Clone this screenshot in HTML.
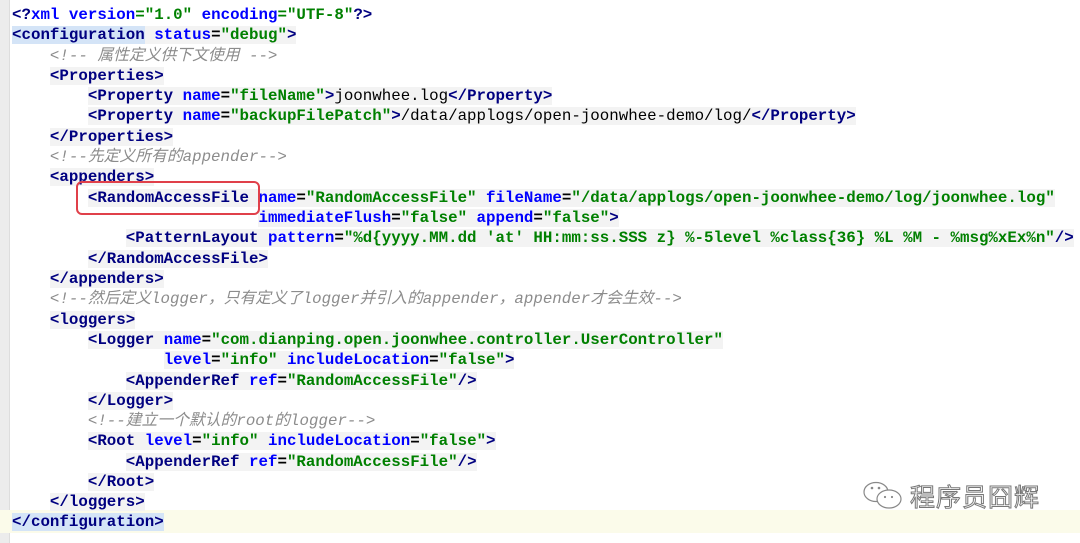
<!DOCTYPE html>
<html><head><meta charset="utf-8"><style>
body{margin:0;width:1080px;height:543px;background:#fff;overflow:hidden;position:relative;font-family:"Liberation Mono","Noto Sans CJK SC",monospace;}
.g{position:absolute;left:0;top:0;width:9px;height:543px;background:#ececec;border-right:1px solid #ddd}
.l{position:absolute;left:12px;height:20px;line-height:20px;font-size:15.8px;white-space:pre;font-weight:bold;color:#000}
.b{background:#f3f3f3}
.t{color:#000080}.a{color:#0000ff}.v{color:#008000}
.c{color:#8c8c8c;font-style:italic;font-weight:normal}
.hl{background:#d4e4f7}
.yl{position:absolute;left:0;top:510px;width:1080px;height:23px;background:#fbfbea}
.box{position:absolute;left:76px;top:181px;width:180px;height:30px;border:2.5px solid #e0404a;border-radius:6px}
.wm{position:absolute;left:862px;top:478px;font-family:"Noto Sans CJK SC",sans-serif;font-size:25px;color:#fff;-webkit-text-stroke:1px #777;letter-spacing:1px}
</style></head><body>
<div class="g"></div>
<div class="yl"></div>
<div class="l" style="top:5px"><span class="t">&lt;?</span><span class="a">xml version</span><span class="v">="1.0"</span> <span class="a">encoding</span><span class="v">="UTF-8"</span><span class="t">?&gt;</span></div>
<div class="l" style="top:25px"><span class="t hl">&lt;configuration</span><span class="b"> <span class="a">status</span>=<span class="v">"debug"</span><span class="t">&gt;</span></span></div>
<div class="l c" style="top:46px">    &lt;!-- 属性定义供下文使用 --&gt;</div>
<div class="l" style="top:66px">    <span class="t b">&lt;Properties&gt;</span></div>
<div class="l" style="top:86px">        <span class="b"><span class="t">&lt;Property</span> <span class="a">name</span>=<span class="v">"fileName"</span><span class="t">&gt;</span><span style="font-weight:normal">joonwhee.log</span><span class="t">&lt;/Property&gt;</span></span></div>
<div class="l" style="top:106px">        <span class="b"><span class="t">&lt;Property</span> <span class="a">name</span>=<span class="v">"backupFilePatch"</span><span class="t">&gt;</span><span style="font-weight:normal">/data/applogs/open-joonwhee-demo/log/</span><span class="t">&lt;/Property&gt;</span></span></div>
<div class="l" style="top:127px">    <span class="t b">&lt;/Properties&gt;</span></div>
<div class="l c" style="top:147px">    &lt;!--先定义所有的appender--&gt;</div>
<div class="l" style="top:167px">    <span class="t b">&lt;appenders&gt;</span></div>
<div class="l" style="top:188px">        <span class="b"><span class="t">&lt;RandomAccessFile</span> <span class="a">name</span>=<span class="v">"RandomAccessFile"</span> <span class="a">fileName</span>=<span class="v">"/data/applogs/open-joonwhee-demo/log/joonwhee.log"</span></span></div>
<div class="l" style="top:208px">                          <span class="b"><span class="a">immediateFlush</span>=<span class="v">"false"</span> <span class="a">append</span>=<span class="v">"false"</span><span class="t">&gt;</span></span></div>
<div class="l" style="top:228px">            <span class="b"><span class="t">&lt;PatternLayout</span> <span class="a">pattern</span>=<span class="v">"%d{yyyy.MM.dd 'at' HH:mm:ss.SSS z} %-5level %class{36} %L %M - %msg%xEx%n"</span><span class="t">/&gt;</span></span></div>
<div class="l" style="top:249px">        <span class="t b">&lt;/RandomAccessFile&gt;</span></div>
<div class="l" style="top:269px">    <span class="t b">&lt;/appenders&gt;</span></div>
<div class="l c" style="top:289px">    &lt;!--然后定义logger，只有定义了logger并引入的appender，appender才会生效--&gt;</div>
<div class="l" style="top:310px">    <span class="t b">&lt;loggers&gt;</span></div>
<div class="l" style="top:330px">        <span class="b"><span class="t">&lt;Logger</span> <span class="a">name</span>=<span class="v">"com.dianping.open.joonwhee.controller.UserController"</span></span></div>
<div class="l" style="top:350px">                <span class="b"><span class="a">level</span>=<span class="v">"info"</span> <span class="a">includeLocation</span>=<span class="v">"false"</span><span class="t">&gt;</span></span></div>
<div class="l" style="top:371px">            <span class="b"><span class="t">&lt;AppenderRef</span> <span class="a">ref</span>=<span class="v">"RandomAccessFile"</span><span class="t">/&gt;</span></span></div>
<div class="l" style="top:391px">        <span class="t b">&lt;/Logger&gt;</span></div>
<div class="l c" style="top:411px">        &lt;!--建立一个默认的root的logger--&gt;</div>
<div class="l" style="top:431px">        <span class="b"><span class="t">&lt;Root</span> <span class="a">level</span>=<span class="v">"info"</span> <span class="a">includeLocation</span>=<span class="v">"false"</span><span class="t">&gt;</span></span></div>
<div class="l" style="top:452px">            <span class="b"><span class="t">&lt;AppenderRef</span> <span class="a">ref</span>=<span class="v">"RandomAccessFile"</span><span class="t">/&gt;</span></span></div>
<div class="l" style="top:472px">        <span class="t b">&lt;/Root&gt;</span></div>
<div class="l" style="top:492px">    <span class="t b">&lt;/loggers&gt;</span></div>
<div class="l" style="top:512px"><span class="t hl">&lt;/configuration&gt;</span></div>
<div class="box"></div>
<svg style="position:absolute;left:862px;top:480px" width="44" height="32" viewBox="0 0 44 32"><ellipse cx="14" cy="12" rx="12" ry="9.5" fill="#fff" stroke="#888" stroke-width="1.2"/><ellipse cx="27" cy="19" rx="12" ry="9" fill="#fff" stroke="#888" stroke-width="1.2"/><circle cx="10" cy="8" r="1.3" fill="#888"/><circle cx="17" cy="8" r="1.3" fill="#888"/><circle cx="23" cy="17" r="1.1" fill="#888"/><circle cx="30" cy="17" r="1.1" fill="#888"/></svg>
<div class="wm" style="left:910px">程序员囧辉</div>
</body></html>
